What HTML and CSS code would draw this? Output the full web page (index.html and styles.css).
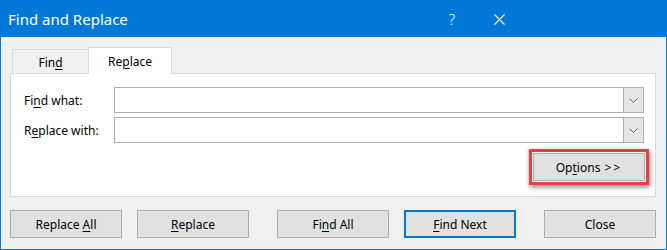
FILE: index.html
```html
<!DOCTYPE html>
<html lang="en">
<head>
    <meta charset="UTF-8">
    <title>Find and Replace</title>
    <link rel="stylesheet" href="styles.css">
</head>
<body>

<div class="window">
    <div class="titlebar">
        <span class="title">Find and Replace</span>
        <span class="help">?</span>
        <span class="close-x">
            <svg width="11" height="11" viewBox="0 0 11 11">
                <path d="M0.5 0.5 L10.5 10.5 M10.5 0.5 L0.5 10.5" stroke="#fff" stroke-width="1.1" fill="none"/>
            </svg>
        </span>
    </div>

    <div class="content">
        <!-- tabs -->
        <div class="tabs">
            <div class="tab">Fin<u>d</u></div>
            <div class="tab active">Re<u>p</u>lace</div>
        </div>

        <div class="panel">
            <div class="row">
                <label>Fi<u>n</u>d what:</label>
                <div class="combo">
                    <div class="field"></div>
                    <div class="drop">
                        <svg width="9" height="5" viewBox="0 0 9 5"><path d="M0.5 0.5 L4.5 4.5 L8.5 0.5" stroke="#6d5a7a" stroke-width="1" fill="none"/></svg>
                    </div>
                </div>
            </div>
            <div class="row">
                <label>R<u>e</u>place with:</label>
                <div class="combo">
                    <div class="field"></div>
                    <div class="drop">
                        <svg width="9" height="5" viewBox="0 0 9 5"><path d="M0.5 0.5 L4.5 4.5 L8.5 0.5" stroke="#6d5a7a" stroke-width="1" fill="none"/></svg>
                    </div>
                </div>
            </div>
            <div class="options-row">
                <div class="highlight">
                    <button class="btn">Op<u>t</u>ions <span class="arrows">&gt;&gt;</span></button>
                </div>
            </div>
        </div>

        <div class="actions">
            <button class="btn">Replace <u>A</u>ll</button>
            <button class="btn"><u>R</u>eplace</button>
            <button class="btn group">Fi<u>n</u>d All</button>
            <button class="btn default"><u>F</u>ind Next</button>
            <button class="btn group">Close</button>
        </div>
    </div>
</div>

</body>
</html>
```

FILE: styles.css
```css
* {
    box-sizing: border-box;
}

body {
    margin: 0;
    background-color: #f0f0f0;
    font-family: "Noto Sans", "Open Sans", sans-serif;
    font-size: 12px;
    color: #000;
}

u {
    text-decoration-thickness: 1px;
    text-underline-offset: 2px;
}

.window {
    width: 667px;
    height: 250px;
    border: 1px solid #0078d7;
    background-color: #f0f0f0;
    display: flex;
    flex-direction: column;
}

.titlebar {
    height: 36px;
    background-color: #0078d7;
    color: #fff;
    display: flex;
    align-items: center;
    padding-left: 7px;
}

.title {
    font-size: 15px;
    flex: 1;
}

.help {
    font-size: 15px;
    font-weight: 300;
    margin-right: 39px;
}

.close-x {
    display: flex;
    margin-right: 161px;
}

.content {
    padding: 10px 10px 0 9px;
}

/* tabs */
.tabs {
    display: flex;
    align-items: flex-end;
    padding-left: 2px;
    height: 26px;
}

.tab {
    width: 77px;
    height: 24px;
    border: 1px solid #d9d9d9;
    border-bottom: none;
    background-color: #f0f0f0;
    display: flex;
    justify-content: center;
    align-items: center;
    padding-top: 2px;
}

.tab.active {
    width: 84px;
    height: 27px;
    margin-bottom: -1px;
    margin-left: -1px;
    background-color: #fff;
    position: relative;
    z-index: 1;
    padding-top: 0;
}

.panel {
    height: 124px;
    background-color: #fff;
    border: 1px solid #d9d9d9;
    padding: 13px 11px 0 13px;
}

.row {
    display: flex;
    align-items: center;
    margin-bottom: 4px;
}

.row label {
    width: 90px;
}

.combo {
    flex: 1;
    height: 26px;
    border: 1px solid #adadad;
    display: flex;
}

.field {
    flex: 1;
}

.drop {
    width: 20px;
    background-color: #e5e5e5;
    border-left: 1px solid #adadad;
    display: flex;
    justify-content: center;
    align-items: center;
}

.options-row {
    display: flex;
    justify-content: flex-end;
    margin-top: 6px;
    margin-right: -5px;
}

.highlight {
    border: 3px solid #f03c3c;
    padding: 1px;
    box-shadow: 1px 2px 5px rgba(0, 0, 0, 0.5);
}

.arrows {
    letter-spacing: 2px;
    margin-left: 1px;
}

.btn {
    width: 112px;
    height: 28px;
    background-color: #e1e1e1;
    border: 1px solid #adadad;
    font-family: inherit;
    font-size: 12px;
    color: #000;
    padding: 0;
    display: block;
}

.btn.default {
    border: 2px solid #0078d7;
}

.actions {
    display: flex;
    gap: 15px;
    margin-top: 13px;
}

.actions .group {
    margin-left: 13px;
}
```
